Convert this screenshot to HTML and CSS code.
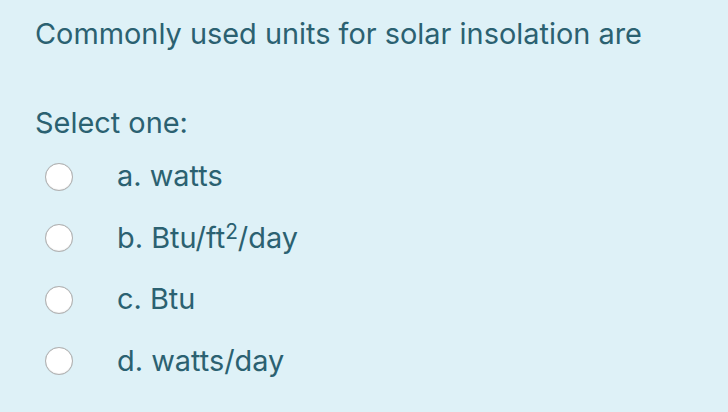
FILE: index.html
```html
<!DOCTYPE html>
<html>
<head>
<meta charset="utf-8">
<link rel="stylesheet" href="styles.css">
</head>
<body>
<div class="q">
  <div class="qtext">Commonly used units for solar insolation are</div>
  <div class="prompt">Select one:</div>
  <div class="answers">
    <label class="opt"><span class="radio"></span><span class="lbl">a. watts</span></label>
    <label class="opt"><span class="radio"></span><span class="lbl">b. Btu/ft<sup>2</sup>/day</span></label>
    <label class="opt"><span class="radio"></span><span class="lbl">c. Btu</span></label>
    <label class="opt"><span class="radio"></span><span class="lbl">d. watts/day</span></label>
  </div>
</div>
</body>
</html>
```
FILE: styles.css
```css
html, body {
  margin: 0;
  padding: 0;
  background: #def1f7;
  width: 728px;
  height: 412px;
  overflow: hidden;
}
.q {
  font-family: Inter, "Liberation Sans", sans-serif;
  color: #2b6171;
  font-size: 28.9px;
  padding: 16px 0 0 35px;
}
.qtext {
  line-height: 36px;
}
.prompt {
  margin-top: 53px;
  line-height: 36px;
}
.answers {
  display: flex;
  flex-direction: column;
  margin-top: 5px;
}
.opt {
  display: flex;
  align-items: center;
  height: 61.5px;
}
.radio {
  width: 26px;
  height: 26px;
  border-radius: 50%;
  background: #fff;
  border: 1px solid #b0b0b0;
  box-shadow: 0 0 0.5px rgba(0,0,0,0.15), inset 0 -1px 1px rgba(0,0,0,0.05);
  margin-left: 10px;
  flex: none;
}
.lbl {
  margin-left: 44px;
  position: relative;
  top: -1px;
}
sup {
  font-size: 0.72em;
  line-height: 0;
  vertical-align: 9px;
}
```
